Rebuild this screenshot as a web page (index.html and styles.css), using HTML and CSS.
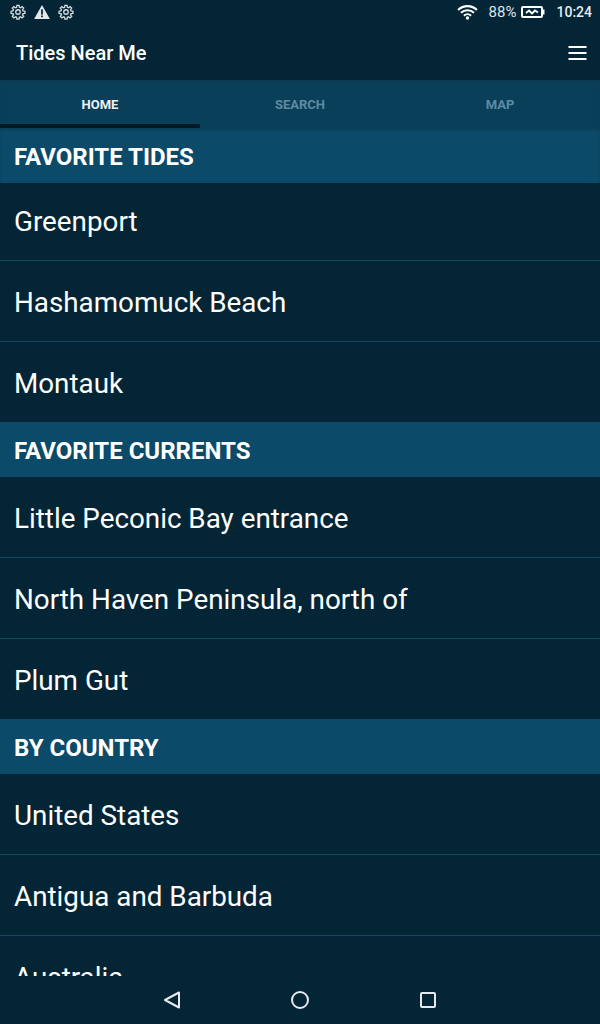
FILE: index.html
```html
<!DOCTYPE html>
<html lang="en">
<head>
<meta charset="utf-8">
<title>Tides Near Me</title>
<link rel="stylesheet" href="styles.css">
</head>
<body>
<div class="app">
  <div class="status">
    <div class="status-left">
      <svg class="gear" viewBox="0 0 24 24"><path d="M10.4 2h3.2l.5 2.9 1.7.7 2.4-1.7 2.3 2.3-1.7 2.4.7 1.7 2.9.5v3.2l-2.9.5-.7 1.7 1.7 2.4-2.3 2.3-2.4-1.7-1.7.7-.5 2.9h-3.2l-.5-2.9-1.7-.7-2.4 1.7-2.3-2.3 1.7-2.4-.7-1.7-2.9-.5v-3.2l2.9-.5.7-1.7-1.7-2.4 2.3-2.3 2.4 1.7 1.7-.7z"/><circle cx="12" cy="12" r="3.4"/></svg>
      <svg class="warn" viewBox="0 0 18 16"><path class="warn-fill" d="M9 0l9 16H0z"/><rect class="warn-mark" x="8" y="5" width="2" height="6"/><rect class="warn-mark" x="8" y="12" width="2" height="2"/></svg>
      <svg class="gear" viewBox="0 0 24 24"><path d="M10.4 2h3.2l.5 2.9 1.7.7 2.4-1.7 2.3 2.3-1.7 2.4.7 1.7 2.9.5v3.2l-2.9.5-.7 1.7 1.7 2.4-2.3 2.3-2.4-1.7-1.7.7-.5 2.9h-3.2l-.5-2.9-1.7-.7-2.4 1.7-2.3-2.3 1.7-2.4-.7-1.7-2.9-.5v-3.2l2.9-.5.7-1.7-1.7-2.4 2.3-2.3 2.4 1.7 1.7-.7z"/><circle cx="12" cy="12" r="3.4"/></svg>
    </div>
    <div class="status-right">
      <svg class="wifi" viewBox="0 0 20 15"><path d="M1 5.5a13 13 0 0 1 18 0M3.8 8.3a9 9 0 0 1 12.4 0M6.6 11a5 5 0 0 1 6.8 0"/><circle cx="10" cy="13.2" r="1.6"/></svg>
      <span class="pct">88%</span>
      <svg class="battery" viewBox="0 0 24 12"><rect class="bat-body" x="1" y="1" width="20" height="10" rx="1"/><rect class="bat-cap" x="21.5" y="3.5" width="2" height="5"/><path class="bat-bolt" d="M5 7l3-2.5 3 3 3-3 3 2"/></svg>
      <span class="time">10:24</span>
    </div>
  </div>
  <header class="topbar">
    <h1 class="title">Tides Near Me</h1>
    <svg class="menu" viewBox="0 0 18 14"><rect y="0" width="18" height="2"/><rect y="6" width="18" height="2"/><rect y="12" width="18" height="2"/></svg>
  </header>
  <nav class="tabs">
    <div class="tab active">HOME</div>
    <div class="tab">SEARCH</div>
    <div class="tab">MAP</div>
  </nav>
  <main class="content">
    <h2 class="section first">FAVORITE TIDES</h2>
    <div class="row">Greenport</div>
    <div class="row">Hashamomuck Beach</div>
    <div class="row last">Montauk</div>
    <h2 class="section">FAVORITE CURRENTS</h2>
    <div class="row">Little Peconic Bay entrance</div>
    <div class="row">North Haven Peninsula, north of</div>
    <div class="row last">Plum Gut</div>
    <h2 class="section">BY COUNTRY</h2>
    <div class="row">United States</div>
    <div class="row">Antigua and Barbuda</div>
    <div class="row">Australia</div>
  </main>
  <footer class="navbar">
    <svg class="nav-icon" viewBox="0 0 18 18"><path d="M16 1.5v15L2 9z"/></svg>
    <svg class="nav-icon" viewBox="0 0 18 18"><circle cx="9" cy="9" r="8"/></svg>
    <svg class="nav-icon" viewBox="0 0 18 18"><rect x="2" y="2" width="14" height="14" rx="1"/></svg>
  </footer>
</div>
</body>
</html>
```
FILE: styles.css
```css
* { box-sizing: border-box; }
html, body { margin: 0; padding: 0; }
body { background: #032536; font-family: Roboto, "Liberation Sans", sans-serif; color: #fff; }
.app { width: 600px; height: 1024px; display: flex; flex-direction: column; overflow: hidden; background: #032536; }

.status { height: 24px; flex: none; display: flex; align-items: center; justify-content: space-between; padding: 0 8px 0 10px; }
.status-left { display: flex; align-items: center; gap: 8px; }
.gear { width: 16px; height: 16px; fill: none; stroke: #d5dbdf; stroke-width: 2; }
.warn { width: 16px; height: 14px; }
.warn-fill { fill: #e4e8ea; }
.warn-mark { fill: #032536; }
.status-right { display: flex; align-items: center; }
.wifi { width: 21px; height: 16px; fill: #fff; stroke: #fff; stroke-width: 2; margin-right: 11px; }
.wifi path { fill: none; }
.wifi circle { stroke: none; }
.pct { font-size: 15px; color: #dfe4e7; margin-right: 5px; }
.battery { width: 24px; height: 12px; margin-right: 11px; }
.bat-body { fill: none; stroke: #fff; stroke-width: 2; }
.bat-cap { fill: #fff; }
.bat-bolt { fill: none; stroke: #fff; stroke-width: 1.8; }
.time { font-size: 14px; font-weight: 500; color: #e8ecee; }

.topbar { height: 56px; flex: none; display: flex; align-items: center; justify-content: space-between; padding: 2px 13px 0 16px; }
.title { margin: 0; font-size: 20px; font-weight: 500; }
.menu { width: 19px; height: 14px; fill: #fff; }

.tabs { height: 48px; flex: none; display: flex; background: #0a3f5a; box-shadow: inset 0 2px 2px rgba(0, 0, 0, .08); }
.tab { flex: 1; display: flex; align-items: center; justify-content: center; font-size: 13px; font-weight: 700; color: #5d8ba3; }
.tab.active { color: #eef2f4; box-shadow: inset 0 -4px 0 #021a27; }

.content { flex: 1; min-height: 0; overflow: hidden; }
.section { margin: 0; height: 55px; padding: 3px 14px 0; display: flex; align-items: center; background: #0c4a69; font-size: 24px; font-weight: 700; }
.section.first { position: relative; margin-bottom: -3px; box-shadow: inset 0 3px 3px rgba(0, 0, 0, .1); }
.row { height: 81px; padding: 3px 14px 0; display: flex; align-items: center; font-size: 27.8px; border-bottom: 1px solid #0c4a69; }
.row.last { border-bottom: 0; height: 80px; }

.navbar { height: 48px; flex: none; display: flex; align-items: center; justify-content: center; gap: 110px; }
.nav-icon { width: 18px; height: 18px; fill: none; stroke: #e6eaec; stroke-width: 2; stroke-linejoin: round; }
```
